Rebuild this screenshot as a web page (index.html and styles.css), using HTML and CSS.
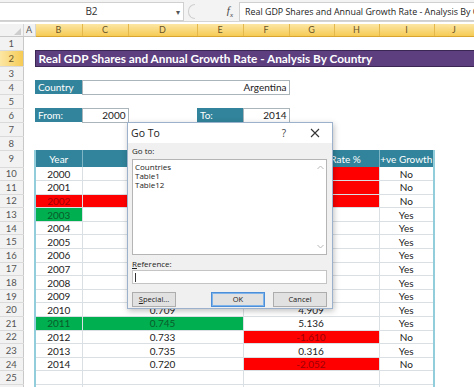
FILE: index.html
```html
<!DOCTYPE html>
<html lang="en">
<head>
  <meta charset="UTF-8" />
  <title>Real GDP Shares</title>
  <link rel="stylesheet" href="styles.css">
</head>
<body>
  <div class="formula-bar">
    <div class="name-box">B2<span class="drop">&#9662;</span></div>
    <div class="splitter"><span class="grip"></span><span class="fx">f<sub>x</sub></span></div>
    <div class="formula">Real GDP Shares and Annual Growth Rate - Analysis By Country</div>
  </div>

  <table class="sheet">
    <colgroup>
      <col style="width:23px"><col style="width:12px"><col style="width:47px"><col style="width:46px">
      <col style="width:69px"><col style="width:46px"><col style="width:46px"><col style="width:45px">
      <col style="width:45px"><col style="width:55px"><col style="width:40px">
    </colgroup>
    <tr class="heads">
      <th class="corner"><span class="tri"></span></th>
      <th class="col">A</th>
      <th class="col sel">B</th><th class="col sel">C</th><th class="col sel">D</th><th class="col sel">E</th>
      <th class="col sel">F</th><th class="col sel">G</th><th class="col sel">H</th><th class="col sel">I</th><th class="col sel">J</th>
    </tr>
    <tr class="r"><th class="rn">1</th><td></td><td colspan="9"></td></tr>
    <tr class="r"><th class="rn sel">2</th><td></td><td colspan="9" class="title">Real GDP Shares and Annual Growth Rate - Analysis By Country</td></tr>
    <tr class="r"><th class="rn">3</th><td></td><td colspan="9"></td></tr>
    <tr class="r"><th class="rn">4</th><td></td><td class="lbl">Country</td><td colspan="4" class="box">Argentina</td><td colspan="4"></td></tr>
    <tr class="r"><th class="rn">5</th><td></td><td colspan="9"></td></tr>
    <tr class="r"><th class="rn">6</th><td></td><td class="lbl">From:</td><td class="box">2000</td><td></td><td class="lbl">To:</td><td class="box">2014</td><td colspan="4"></td></tr>
    <tr class="r"><th class="rn">7</th><td></td><td colspan="9"></td></tr>
    <tr class="r"><th class="rn">8</th><td></td><td colspan="9"></td></tr>
    <tr class="hr"><th class="rn">9</th><td></td><td class="hd first">Year</td><td colspan="3" class="hd">GDP Share</td><td colspan="3" class="hd">Annual Growth Rate %</td><td class="hd last">+ve Growth</td><td></td></tr>
    <tr class="d"><th class="rn">10</th><td></td><td class="c first">2000</td><td colspan="3" class="c">0.771</td><td colspan="3" class="c red">-0.789</td><td class="c last">No</td><td></td></tr>
    <tr class="d"><th class="rn">11</th><td></td><td class="c first">2001</td><td colspan="3" class="c">0.751</td><td colspan="3" class="c red">-4.409</td><td class="c last">No</td><td></td></tr>
    <tr class="d"><th class="rn">12</th><td></td><td class="c first red">2002</td><td colspan="3" class="c red">0.683</td><td colspan="3" class="c red">-10.894</td><td class="c last">No</td><td></td></tr>
    <tr class="d"><th class="rn">13</th><td></td><td class="c first green">2003</td><td colspan="3" class="c">0.696</td><td colspan="3" class="c">8.837</td><td class="c last">Yes</td><td></td></tr>
    <tr class="d"><th class="rn">14</th><td></td><td class="c first">2004</td><td colspan="3" class="c">0.704</td><td colspan="3" class="c">9.030</td><td class="c last">Yes</td><td></td></tr>
    <tr class="d"><th class="rn">15</th><td></td><td class="c first">2005</td><td colspan="3" class="c">0.715</td><td colspan="3" class="c">8.852</td><td class="c last">Yes</td><td></td></tr>
    <tr class="d"><th class="rn">16</th><td></td><td class="c first">2006</td><td colspan="3" class="c">0.722</td><td colspan="3" class="c">8.047</td><td class="c last">Yes</td><td></td></tr>
    <tr class="d"><th class="rn">17</th><td></td><td class="c first">2007</td><td colspan="3" class="c">0.733</td><td colspan="3" class="c">9.008</td><td class="c last">Yes</td><td></td></tr>
    <tr class="d"><th class="rn">18</th><td></td><td class="c first">2008</td><td colspan="3" class="c">0.735</td><td colspan="3" class="c">4.058</td><td class="c last">Yes</td><td></td></tr>
    <tr class="d"><th class="rn">19</th><td></td><td class="c first">2009</td><td colspan="3" class="c">0.703</td><td colspan="3" class="c">0.050</td><td class="c last">Yes</td><td></td></tr>
    <tr class="d"><th class="rn">20</th><td></td><td class="c first">2010</td><td colspan="3" class="c">0.709</td><td colspan="3" class="c">4.909</td><td class="c last">Yes</td><td></td></tr>
    <tr class="d"><th class="rn">21</th><td></td><td class="c first green">2011</td><td colspan="3" class="c green">0.745</td><td colspan="3" class="c">5.136</td><td class="c last">Yes</td><td></td></tr>
    <tr class="d"><th class="rn">22</th><td></td><td class="c first">2012</td><td colspan="3" class="c">0.733</td><td colspan="3" class="c red">-1.610</td><td class="c last">No</td><td></td></tr>
    <tr class="d"><th class="rn">23</th><td></td><td class="c first">2013</td><td colspan="3" class="c">0.735</td><td colspan="3" class="c">0.316</td><td class="c last">Yes</td><td></td></tr>
    <tr class="d"><th class="rn">24</th><td></td><td class="c first">2014</td><td colspan="3" class="c">0.720</td><td colspan="3" class="c red">-2.052</td><td class="c last">No</td><td></td></tr>
    <tr class="d"><th class="rn">25</th><td></td><td class="c first"></td><td colspan="3" class="c"></td><td colspan="3" class="c"></td><td class="c last"></td><td></td></tr>
    <tr class="d"><th class="rn">26</th><td></td><td class="c first"></td><td colspan="3" class="c"></td><td colspan="3" class="c"></td><td class="c last"></td><td></td></tr>
  </table>

  <div class="dialog">
    <div class="dlg-title">
      <span class="dlg-name">Go To</span>
      <span class="dlg-help">?</span>
      <svg class="dlg-close" width="10" height="10" viewBox="0 0 10 10"><path d="M1 1L9 9M9 1L1 9" stroke="#333" stroke-width="1.1"/></svg>
    </div>
    <div class="dlg-body">
      <div class="dlg-label">Go to:</div>
      <div class="listbox">
        <div class="items">
          <div>Countries</div>
          <div>Table1</div>
          <div>Table12</div>
        </div>
        <div class="scroll">
          <svg width="7" height="5" viewBox="0 0 7 5"><path d="M0.5 4L3.5 1L6.5 4" fill="none" stroke="#b8b8b8" stroke-width="1"/></svg>
          <svg width="7" height="5" viewBox="0 0 7 5"><path d="M0.5 1L3.5 4L6.5 1" fill="none" stroke="#b8b8b8" stroke-width="1"/></svg>
        </div>
      </div>
      <div class="dlg-label ref"><u>R</u>eference:</div>
      <div class="ref-input"><span class="caret"></span></div>
      <div class="buttons">
        <div class="btn special"><u>S</u>pecial...</div>
        <div class="spacer"></div>
        <div class="btn ok">OK</div>
        <div class="btn cancel">Cancel</div>
      </div>
    </div>
  </div>
</body>
</html>
```

FILE: styles.css
```css
body {
  margin: 0;
  width: 474px;
  height: 387px;
  overflow: hidden;
  background: #fff;
  font-family: Lato, 'Liberation Sans', sans-serif;
  position: relative;
}

/* formula bar */
.formula-bar {
  display: flex;
  height: 22px;
  border-bottom: 1px solid #d4d4d4;
  background: #f3f3f3;
  box-sizing: border-box;
  padding-top: 2px;
  margin-bottom: 2px;
}

.name-box {
  width: 184px;
  background: #fff;
  border: 1px solid #d0d0d0;
  border-left: none;
  font-family: 'Open Sans', sans-serif;
  font-size: 10px;
  color: #333;
  text-align: center;
  line-height: 17px;
  position: relative;
  box-sizing: border-box;
}

.drop {
  position: absolute;
  right: 3px;
  top: 0;
  font-size: 8px;
  color: #555;
}

.splitter {
  width: 55px;
  display: flex;
  align-items: center;
  justify-content: space-between;
  padding: 0 6px 0 4px;
  box-sizing: border-box;
}

.grip {
  width: 6px;
  height: 13px;
  border: 1px solid #cfcfcf;
  border-right: none;
  border-radius: 7px 0 0 7px;
}

.fx {
  font-family: 'Liberation Serif', serif;
  font-style: italic;
  font-size: 11px;
  color: #444;
}

.fx sub {
  font-size: 7px;
}

.formula {
  flex: 1;
  background: #fff;
  border: 1px solid #d0d0d0;
  border-right: none;
  font-family: 'Open Sans', sans-serif;
  font-size: 8.9px;
  color: #222;
  line-height: 17px;
  padding-left: 5px;
  white-space: nowrap;
  overflow: hidden;
  box-sizing: border-box;
}

/* sheet */
.sheet {
  border-collapse: collapse;
  table-layout: fixed;
  width: 474px;
  font-size: 10px;
  color: #222;
}

.sheet td, .sheet th {
  padding: 0;
  white-space: nowrap;
  overflow: hidden;
}

.heads {
  height: 12px;
}

.heads th {
  font-weight: normal;
  font-size: 9px;
  color: #555;
  line-height: 11px;
  border-right: 1px solid #d5d5d5;
  border-bottom: 1px solid #c8c8c8;
  background: #f2f2f2;
}

.heads th.sel {
  background: linear-gradient(#fbe6a4, #f6cb55);
  border-right: 1px solid #e4b84a;
  border-bottom: 1px solid #d9a52e;
  color: #6a5426;
}

.corner {
  position: relative;
}

.tri {
  position: absolute;
  right: 2px;
  bottom: 1px;
  border-left: 7px solid transparent;
  border-bottom: 7px solid #cdcdcd;
}

.rn {
  font-weight: normal;
  font-size: 9.5px;
  color: #555;
  background: #f2f2f2;
  border-right: 1px solid #c8c8c8;
  border-bottom: 1px solid #dadada;
  text-align: center;
}

.rn.sel {
  background: linear-gradient(90deg, #fbe6a4, #f6cb55);
  color: #6a5426;
}

.r { height: 14px; }
.hr { height: 17px; }
.d { height: 13.6px; }

.title {
  background: #5d3f80;
  color: #fff;
  font-weight: bold;
  font-size: 11.8px;
  padding-left: 3px !important;
  border: 1px solid #3b2753;
}

.lbl {
  background: #31849b;
  color: #fff;
  font-size: 10px;
  padding-left: 3px !important;
}

.box {
  border: 1px solid #a9b4bb;
  text-align: right;
  padding-right: 2px !important;
  font-size: 10px;
}

.hd {
  background: #31849b;
  color: #fff;
  text-align: center;
  font-size: 10px;
  border-left: 1px solid #7fb6c6;
}

.hd.first {
  border-left: 2px solid #92cddc;
}

.hd.last {
  border-right: 2px solid #92cddc;
}

.c {
  text-align: center;
  border-bottom: 1px solid #d9dfe3;
  border-left: 1px solid #d9dfe3;
}

.c.first {
  border-left: 2px solid #92cddc;
}

.c.last {
  border-right: 2px solid #92cddc;
}

.red {
  background: #ff0000;
  color: #9c0006;
}

.green {
  background: #00b050;
  color: #0b5a2a;
}

/* Go To dialog */
.dialog {
  position: absolute;
  left: 127px;
  top: 122px;
  width: 206px;
  height: 187px;
  box-sizing: border-box;
  border: 1px solid #9bb1cc;
  background: #f0f0f0;
  box-shadow: 1px 2px 6px rgba(0,0,0,0.25);
  font-family: 'Open Sans', sans-serif;
  color: #222;
  display: flex;
  flex-direction: column;
}

.dlg-title {
  height: 20px;
  background: #fff;
  display: flex;
  align-items: center;
  padding-left: 3px;
  flex-shrink: 0;
}

.dlg-name {
  font-size: 10.5px;
  flex: 1;
}

.dlg-help {
  font-size: 10px;
  color: #444;
  margin-right: 24px;
}

.dlg-close {
  margin-right: 12px;
}

.dlg-body {
  padding: 2px 5px 0 4px;
  display: flex;
  flex-direction: column;
}

.dlg-label {
  font-size: 8px;
  line-height: 11px;
  margin-bottom: 3px;
}

.dlg-label.ref {
  margin-top: 3px;
  margin-bottom: 1px;
}

.listbox {
  height: 96px;
  background: #fff;
  border: 1px solid #b5b5b5;
  box-sizing: border-box;
  display: flex;
}

.items {
  flex: 1;
  font-size: 8px;
  line-height: 9px;
  padding: 2px 0 0 2px;
}

.scroll {
  width: 11px;
  display: flex;
  flex-direction: column;
  justify-content: space-between;
  align-items: center;
  padding: 5px 0 5px;
}

.ref-input {
  height: 14px;
  background: #fff;
  border: 1px solid #c4c4c4;
  box-sizing: border-box;
  padding: 2px 0 0 2px;
}

.caret {
  display: block;
  width: 1px;
  height: 9px;
  background: #333;
}

.buttons {
  display: flex;
  margin-top: 8px;
  gap: 8px;
}

.btn {
  height: 15px;
  box-sizing: border-box;
  border: 1px solid #adadad;
  background: #e1e1e1;
  font-size: 7.5px;
  line-height: 13px;
  text-align: center;
}

.special { width: 44px; }
.spacer { flex: 1; }
.ok { width: 54px; border: 1px solid #4d8ed8; box-shadow: inset 0 0 0 1px #7eb4ea; }
.cancel { width: 54px; }
```
